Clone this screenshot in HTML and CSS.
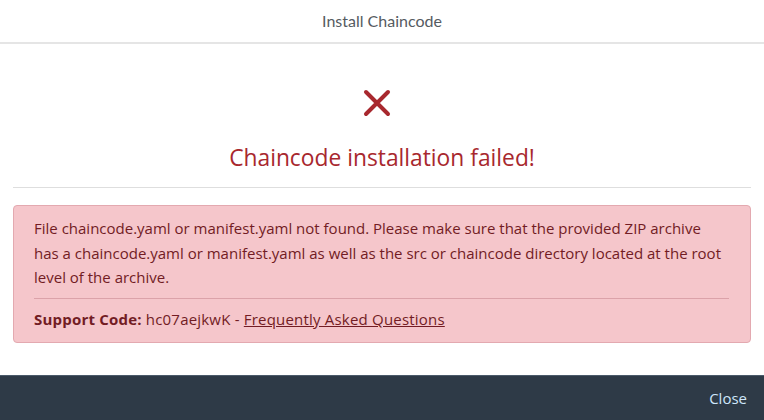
FILE: index.html
```html
<!DOCTYPE html>
<html lang="en">
<head>
  <meta charset="UTF-8">
  <meta name="viewport" content="width=device-width, initial-scale=1.0">
  <title>Install Chaincode</title>
  <link rel="stylesheet" href="styles.css">
</head>
<body>

<div class="modal">
  <div class="modal-header">Install Chaincode</div>

  <div class="modal-body">
    <div class="result">
      <svg class="result-icon" width="28" height="28" viewBox="0 0 28 28">
        <path d="M3 3 L25 25 M25 3 L3 25" stroke="#a8282e" stroke-width="4" stroke-linecap="round" fill="none"/>
      </svg>
      <div class="result-title">Chaincode installation failed!</div>
    </div>

    <div class="alert">
      <p class="alert-text">File chaincode.yaml or manifest.yaml not found. Please make sure that the provided ZIP archive has a chaincode.yaml or manifest.yaml as well as the src or chaincode directory located at the root level of the archive.</p>
      <div class="alert-support">
        <b>Support Code:</b> hc07aejkwK - <a href="#">Frequently Asked Questions</a>
      </div>
    </div>
  </div>

  <div class="modal-footer">
    <a class="close-btn" href="#">Close</a>
  </div>
</div>

</body>
</html>
```

FILE: styles.css
```css
body {
  margin: 0;
  font-family: "Open Sans", "Noto Sans", sans-serif;
  background: #fff;
}

.modal {
  display: flex;
  flex-direction: column;
  height: 420px;
}

.modal-header {
  height: 44px;
  line-height: 42px;
  text-align: center;
  font-family: Lato, sans-serif;
  font-size: 16px;
  color: #555b61;
  border-bottom: 2px solid #e5e5e5;
  box-sizing: border-box;
}

.modal-body {
  flex: 1;
  padding: 0 13px;
}

.result {
  display: flex;
  flex-direction: column;
  align-items: center;
  padding-top: 45px;
  padding-bottom: 15px;
  border-bottom: 1px solid #dedede;
}

.result-icon {
  display: block;
  margin-right: 10px; /* icon sits a bit left of center */
}

.result-title {
  margin-top: 26px;
  font-size: 22.8px;
  line-height: 29px;
  color: #a8282e;
}

.alert {
  margin-top: 17px;
  background: #f5c6cb;
  border: 1px solid #e3a9b0;
  border-radius: 4px;
  padding: 10px 21px 11px 20px;
  color: #721c24;
  font-size: 15px;
}

.alert-text {
  margin: 0;
  line-height: 24.5px;
  padding-bottom: 8px;
  border-bottom: 1px solid #dba2a9;
}

.alert-support {
  padding-top: 8px;
  line-height: 24px;
  letter-spacing: 0.2px;
}

.alert-support a {
  color: #721c24;
  text-decoration: underline;
}

.modal-footer {
  height: 44px;
  background: #2e3a47;
  border-top: 1px solid #4b5a6a;
  display: flex;
  justify-content: flex-end;
  align-items: center;
  padding: 0 17px;
}

.close-btn {
  color: #cfe6fb;
  font-size: 15px;
  text-decoration: none;
}
```
